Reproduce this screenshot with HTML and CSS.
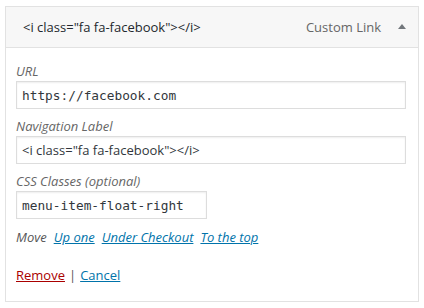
FILE: index.html
```html
<!DOCTYPE html>
<html>
<head>
<meta charset="utf-8">
<link rel="stylesheet" href="styles.css">
</head>
<body>
<div class="menu-item">
  <div class="handle">
    <span class="item-title">&lt;i class="fa fa-facebook"&gt;&lt;/i&gt;</span>
    <span class="item-controls">
      <span class="item-type">Custom Link</span>
      <span class="toggle" aria-hidden="true"></span>
    </span>
  </div>
  <div class="settings">
    <label class="field">
      <span class="label">URL</span>
      <span class="input mono wide">https://facebook.com</span>
    </label>
    <label class="field">
      <span class="label">Navigation Label</span>
      <span class="input wide">&lt;i class="fa fa-facebook"&gt;&lt;/i&gt;</span>
    </label>
    <label class="field field-last">
      <span class="label">CSS Classes (optional)</span>
      <span class="input mono narrow">menu-item-float-right</span>
    </label>
    <div class="move">
      <span class="move-label">Move</span>
      <a href="#">Up one</a>
      <a href="#">Under Checkout</a>
      <a href="#">To the top</a>
    </div>
    <div class="actions">
      <a href="#" class="remove">Remove</a>
      <span class="sep">|</span>
      <a href="#" class="cancel">Cancel</a>
    </div>
  </div>
</div>
</body>
</html>
```
FILE: styles.css
```css
html, body {
  margin: 0;
  padding: 0;
  background: #fff;
}
body {
  padding: 6px 6px 6px 5px;
  font-family: "Open Sans", "Noto Sans", sans-serif;
  font-size: 13px;
  color: #32373c;
}
.menu-item {
  width: 414px;
  box-sizing: border-box;
}
.handle {
  height: 42px;
  box-sizing: border-box;
  border: 1px solid #e2e2e2;
  background: #f7f7f7;
  display: flex;
  align-items: center;
  justify-content: space-between;
  padding: 0 12px 0 17px;
}
.item-title {
  font-size: 13px;
  color: #23282d;
}
.item-controls {
  display: flex;
  align-items: center;
  gap: 17px;
}
.item-type {
  color: #666;
  font-size: 13px;
}
.toggle {
  width: 0;
  height: 0;
  border-left: 4px solid transparent;
  border-right: 4px solid transparent;
  border-bottom: 5px solid #72777c;
  margin-top: -2px;
}
.settings {
  border: 1px solid #e2e2e2;
  border-top: none;
  padding: 13px 10px 16px 10px;
  display: flex;
  flex-direction: column;
}
.field {
  display: flex;
  flex-direction: column;
  margin-bottom: 8px;
}
.field + .field {
  margin-top: -1px;
}
.field-last {
  margin-bottom: 8px;
}
.label {
  font-style: italic;
  color: #666;
  line-height: 20px;
}
.input {
  box-sizing: border-box;
  height: 28px;
  border: 1px solid #ddd;
  box-shadow: inset 0 1px 2px rgba(0,0,0,0.07);
  padding: 0 5px;
  display: flex;
  align-items: center;
  color: #32373c;
  font-size: 13px;
}
.mono {
  font-family: "DejaVu Sans Mono", "Liberation Mono", monospace;
  font-size: 12.8px;
  color: #32373c;
}
.wide { width: 390px; }
.narrow { width: 191px; }
.move {
  line-height: 20px;
  font-style: italic;
  display: flex;
  gap: 7px;
}
.move-label { color: #555; }
a {
  color: #0073aa;
  text-decoration: underline;
}
.actions {
  margin-top: 18px;
  line-height: 20px;
  display: flex;
  gap: 4px;
}
.remove { color: #a00; }
.sep { color: #555; }
```
